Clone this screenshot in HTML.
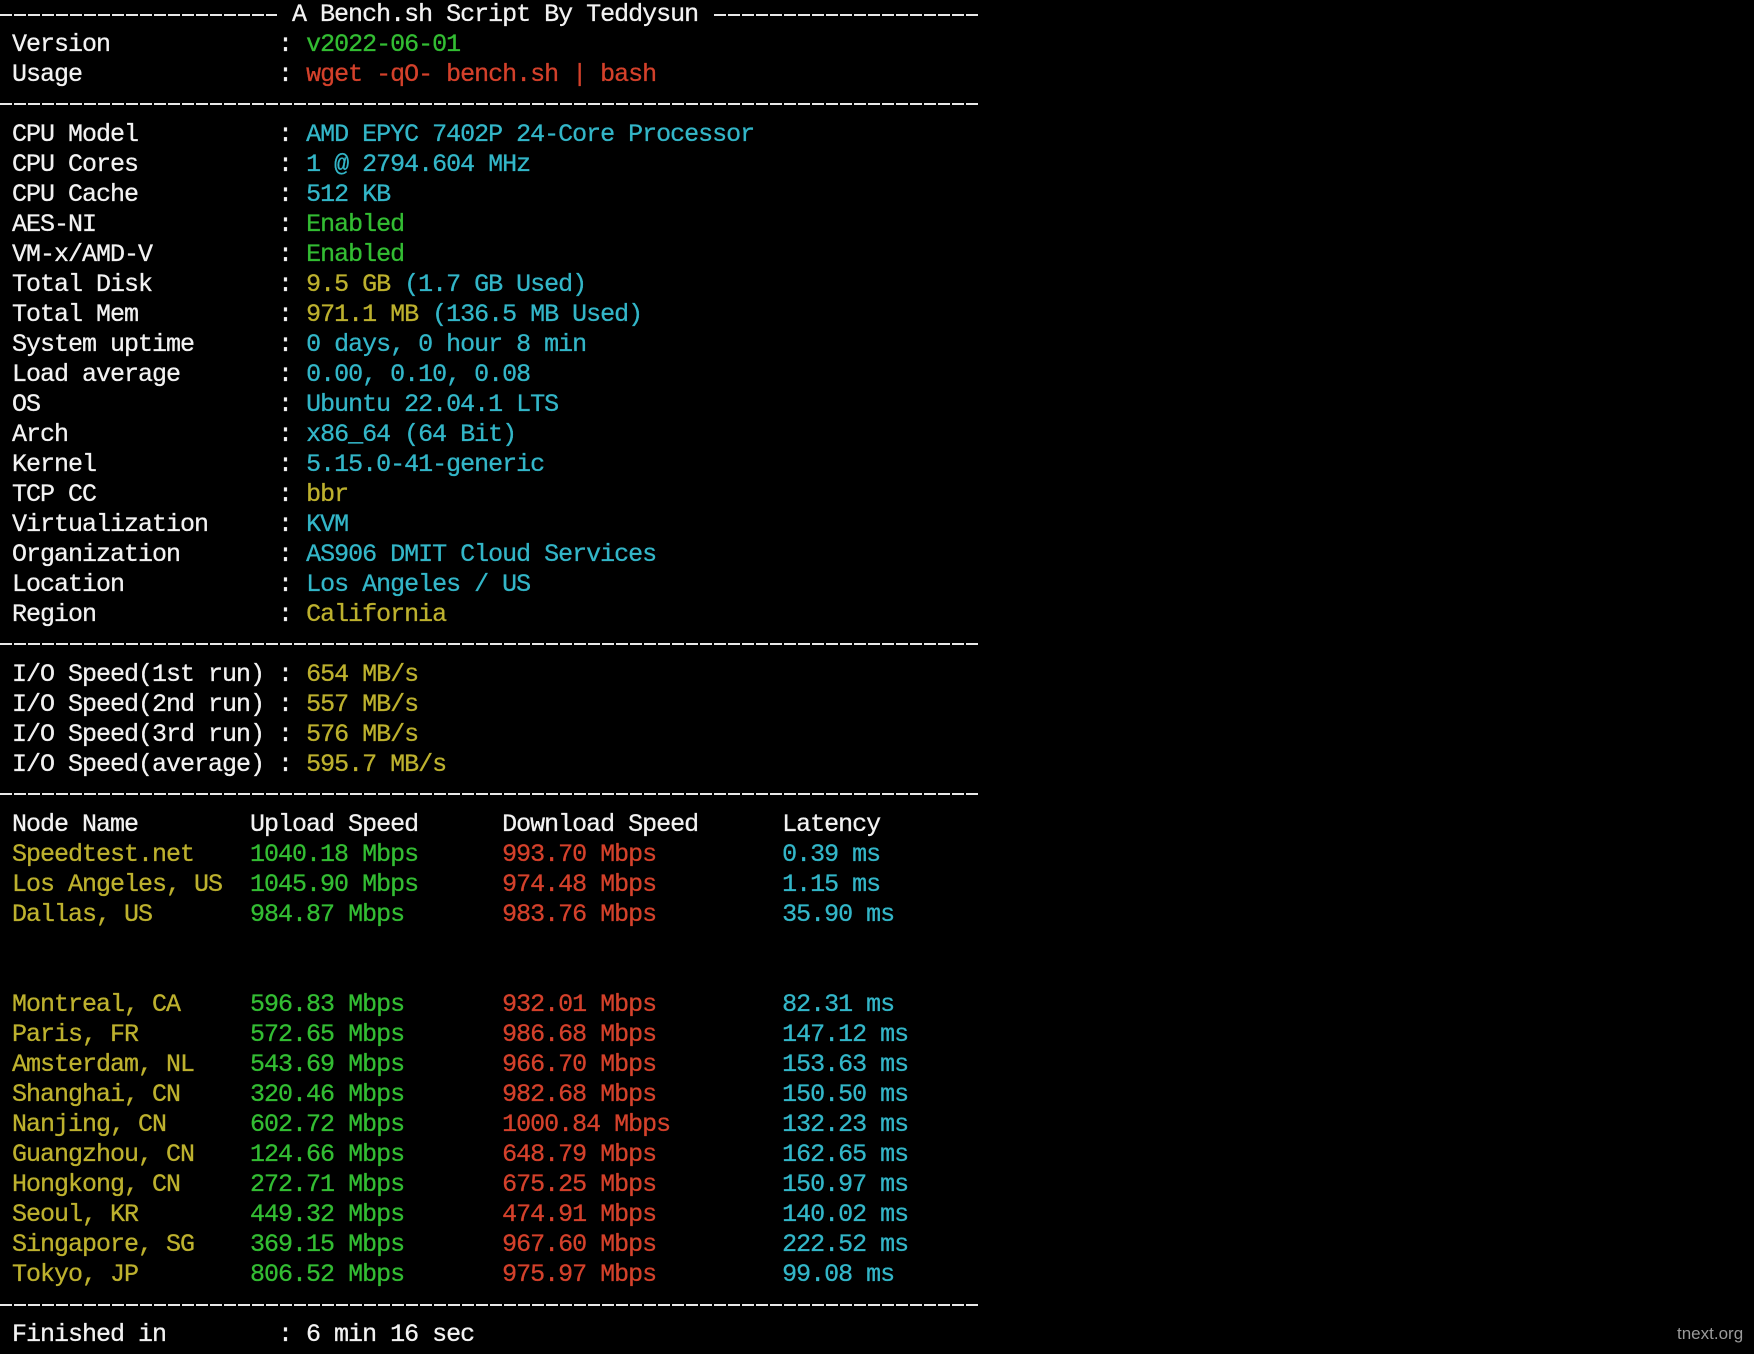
<!DOCTYPE html>
<html><head><meta charset="utf-8"><style>
html,body{margin:0;padding:0;background:#000;width:1754px;height:1354px;overflow:hidden}
pre{position:absolute;left:-2px;top:0.3px;margin:0;font-family:"Liberation Mono",monospace;font-size:25px;letter-spacing:-1px;line-height:29.98px;color:#f2f2f2;white-space:pre;-webkit-text-stroke:0.3px currentColor}
.g{color:#33bd33}.r{color:#d4412b}.c{color:#33b6c8}.y{color:#bdb12e}
.d{position:absolute;left:0;height:2px;background:repeating-linear-gradient(90deg,#e8e8e8 0 12px,transparent 12px 14px)}
.wm{position:absolute;left:1677px;top:1324px;font-family:"Liberation Sans",sans-serif;font-size:17px;color:#9a9a9a}
</style></head><body>
<div class="d" style="top:14px;width:277px"></div>
<div class="d" style="top:14px;left:714px;width:266px"></div>
<div class="d" style="top:103px;width:980px"></div>
<div class="d" style="top:643px;width:980px"></div>
<div class="d" style="top:793px;width:980px"></div>
<div class="d" style="top:1304px;width:980px"></div>
<pre>                     A Bench.sh Script By Teddysun
 Version            : <span class="g">v2022-06-01</span>
 Usage              : <span class="r">wget -qO- bench.sh | bash</span>

 CPU Model          : <span class="c">AMD EPYC 7402P 24-Core Processor</span>
 CPU Cores          : <span class="c">1 @ 2794.604 MHz</span>
 CPU Cache          : <span class="c">512 KB</span>
 AES-NI             : <span class="g">Enabled</span>
 VM-x/AMD-V         : <span class="g">Enabled</span>
 Total Disk         : <span class="y">9.5 GB</span> <span class="c">(1.7 GB Used)</span>
 Total Mem          : <span class="y">971.1 MB</span> <span class="c">(136.5 MB Used)</span>
 System uptime      : <span class="c">0 days, 0 hour 8 min</span>
 Load average       : <span class="c">0.00, 0.10, 0.08</span>
 OS                 : <span class="c">Ubuntu 22.04.1 LTS</span>
 Arch               : <span class="c">x86_64 (64 Bit)</span>
 Kernel             : <span class="c">5.15.0-41-generic</span>
 TCP CC             : <span class="y">bbr</span>
 Virtualization     : <span class="c">KVM</span>
 Organization       : <span class="c">AS906 DMIT Cloud Services</span>
 Location           : <span class="c">Los Angeles / US</span>
 Region             : <span class="y">California</span>

 I/O Speed(1st run) : <span class="y">654 MB/s</span>
 I/O Speed(2nd run) : <span class="y">557 MB/s</span>
 I/O Speed(3rd run) : <span class="y">576 MB/s</span>
 I/O Speed(average) : <span class="y">595.7 MB/s</span>

 Node Name        Upload Speed      Download Speed      Latency
<span class="y"> Speedtest.net    </span><span class="g">1040.18 Mbps      </span><span class="r">993.70 Mbps         </span><span class="c">0.39 ms</span>
<span class="y"> Los Angeles, US  </span><span class="g">1045.90 Mbps      </span><span class="r">974.48 Mbps         </span><span class="c">1.15 ms</span>
<span class="y"> Dallas, US       </span><span class="g">984.87 Mbps       </span><span class="r">983.76 Mbps         </span><span class="c">35.90 ms</span>


<span class="y"> Montreal, CA     </span><span class="g">596.83 Mbps       </span><span class="r">932.01 Mbps         </span><span class="c">82.31 ms</span>
<span class="y"> Paris, FR        </span><span class="g">572.65 Mbps       </span><span class="r">986.68 Mbps         </span><span class="c">147.12 ms</span>
<span class="y"> Amsterdam, NL    </span><span class="g">543.69 Mbps       </span><span class="r">966.70 Mbps         </span><span class="c">153.63 ms</span>
<span class="y"> Shanghai, CN     </span><span class="g">320.46 Mbps       </span><span class="r">982.68 Mbps         </span><span class="c">150.50 ms</span>
<span class="y"> Nanjing, CN      </span><span class="g">602.72 Mbps       </span><span class="r">1000.84 Mbps        </span><span class="c">132.23 ms</span>
<span class="y"> Guangzhou, CN    </span><span class="g">124.66 Mbps       </span><span class="r">648.79 Mbps         </span><span class="c">162.65 ms</span>
<span class="y"> Hongkong, CN     </span><span class="g">272.71 Mbps       </span><span class="r">675.25 Mbps         </span><span class="c">150.97 ms</span>
<span class="y"> Seoul, KR        </span><span class="g">449.32 Mbps       </span><span class="r">474.91 Mbps         </span><span class="c">140.02 ms</span>
<span class="y"> Singapore, SG    </span><span class="g">369.15 Mbps       </span><span class="r">967.60 Mbps         </span><span class="c">222.52 ms</span>
<span class="y"> Tokyo, JP        </span><span class="g">806.52 Mbps       </span><span class="r">975.97 Mbps         </span><span class="c">99.08 ms</span>

 Finished in        : 6 min 16 sec</pre>
<div class="wm">tnext.org</div>
</body></html>
